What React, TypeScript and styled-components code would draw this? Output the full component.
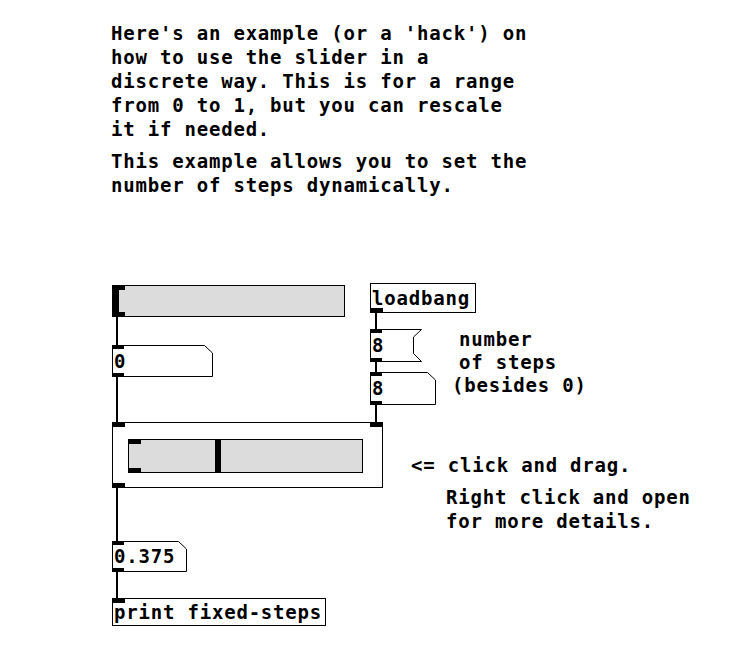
import React from 'react';
import styled, { createGlobalStyle } from 'styled-components';

const GlobalStyle = createGlobalStyle`
  html, body {
    margin: 0;
    padding: 0;
    background: #ffffff;
  }
`;

interface At {
  $x: number;
  $y: number;
}

interface Sized extends At {
  $w: number;
  $h: number;
}

const Canvas = styled.div`
  position: relative;
  width: 731px;
  height: 658px;
  overflow: hidden;
  background: #ffffff;
  color: #000000;
  font-family: 'DejaVu Sans Mono', 'Liberation Mono', monospace;
  font-weight: bold;
  font-size: 19px;
  letter-spacing: 0.8px;
`;

const Cords = styled.svg`
  position: absolute;
  left: 0;
  top: 0;
  pointer-events: none;
`;

const Comment = styled.div<At>`
  position: absolute;
  left: ${({ $x }) => $x}px;
  top: ${({ $y }) => $y}px;
  white-space: pre;
`;

const Line = styled.div<{ $pitch: number; $shift?: number }>`
  line-height: ${({ $pitch }) => $pitch}px;
  margin-left: ${({ $shift }) => $shift ?? 0}px;
`;

const Para = styled.div`
  margin-top: 8px;
`;

const Node = styled.div<Sized>`
  position: absolute;
  left: ${({ $x }) => $x}px;
  top: ${({ $y }) => $y}px;
  width: ${({ $w }) => $w}px;
  height: ${({ $h }) => $h}px;
  box-sizing: border-box;
`;

const ObjectBox = styled(Node)`
  border: 1px solid #000000;
  padding-left: 1px;
  line-height: ${({ $h }) => $h - 2}px;
  white-space: pre;
`;

const Outline = styled.svg`
  position: absolute;
  left: 0;
  top: 0;
  overflow: visible;
`;

const Label = styled.span<{ $h: number }>`
  position: relative;
  display: block;
  padding-left: 2px;
  line-height: ${({ $h }) => $h}px;
  white-space: pre;
`;

const Iolet = styled.span<{ $side: 'left' | 'right'; $edge: 'top' | 'bottom' }>`
  position: absolute;
  ${({ $side }) => $side}: 0;
  ${({ $edge }) => $edge}: 0;
  width: 12px;
  height: 4px;
  background: #000000;
`;

const Track = styled(Node)`
  border: 1px solid #000000;
  background: #dcdcdc;
`;

const Knob = styled.span`
  position: absolute;
  top: 0;
  bottom: 0;
  width: 6px;
  background: #000000;
`;

const Frame = styled(Node)`
  border: 1px solid #000000;
  background: #ffffff;
`;

// number boxes have a clipped top-right corner, message boxes a flag on the right
const FlagBox: React.FC<Sized & { $kind: 'number' | 'message'; text: string }> = ({
  $x,
  $y,
  $w,
  $h,
  $kind,
  text,
}) => {
  const c = 8;
  const r = $w - 0.5;
  const b = $h - 0.5;
  const points =
    $kind === 'number'
      ? `0.5,0.5 ${r - c},0.5 ${r},${c} ${r},${b} 0.5,${b}`
      : `0.5,0.5 ${r},0.5 ${r - c},${c} ${r - c},${b - c} ${r},${b} 0.5,${b}`;
  return (
    <Node $x={$x} $y={$y} $w={$w} $h={$h}>
      <Outline width={$w} height={$h}>
        <polygon points={points} fill="#ffffff" stroke="#000000" strokeWidth={1} />
      </Outline>
      <Label $h={$h}>{text}</Label>
      <Iolet $side="left" $edge="top" />
      <Iolet $side="left" $edge="bottom" />
    </Node>
  );
};

const Slider: React.FC<Sized & { value: number }> = ({ $x, $y, $w, $h, value }) => (
  <Track $x={$x} $y={$y} $w={$w} $h={$h}>
    <Iolet $side="left" $edge="top" />
    <Iolet $side="left" $edge="bottom" />
    <Knob style={{ left: Math.max(0, Math.round(value * ($w - 2)) - 1) }} />
  </Track>
);

const cords: [number, number, number, number][] = [
  [117, 317, 117, 345],
  [117, 377, 117, 422],
  [117, 488, 117, 541],
  [117, 572, 117, 598],
  [376, 313, 376, 329],
  [376, 362, 376, 372],
  [376, 405, 376, 422],
];

export default function App() {
  return (
    <>
      <GlobalStyle />
      <Canvas>
        <Cords width={731} height={658}>
          {cords.map(([x1, y1, x2, y2], i) => (
            <line key={i} x1={x1} y1={y1} x2={x2} y2={y2} stroke="#000000" strokeWidth={2} />
          ))}
        </Cords>

        <Comment $x={111} $y={21}>
          <Line $pitch={24}>Here's an example (or a 'hack') on</Line>
          <Line $pitch={24}>how to use the slider in a</Line>
          <Line $pitch={24}>discrete way. This is for a range</Line>
          <Line $pitch={24}>from 0 to 1, but you can rescale</Line>
          <Line $pitch={24}>it if needed.</Line>
          <Para>
            <Line $pitch={24}>This example allows you to set the</Line>
            <Line $pitch={24}>number of steps dynamically.</Line>
          </Para>
        </Comment>

        <Slider $x={112} $y={285} $w={233} $h={32} value={0} />
        <FlagBox $kind="number" $x={112} $y={345} $w={101} $h={32} text="0" />

        <ObjectBox $x={370} $y={283} $w={106} $h={30}>
          loadbang
          <Iolet $side="left" $edge="bottom" />
        </ObjectBox>
        <FlagBox $kind="message" $x={370} $y={329} $w={52} $h={33} text="8" />
        <FlagBox $kind="number" $x={370} $y={372} $w={66} $h={33} text="8" />

        <Comment $x={459} $y={328}>
          <Line $pitch={23}>number</Line>
          <Line $pitch={23}>of steps</Line>
          <Line $pitch={23} $shift={-7}>(besides 0)</Line>
        </Comment>

        <Frame $x={112} $y={422} $w={271} $h={66}>
          <Iolet $side="left" $edge="top" />
          <Iolet $side="right" $edge="top" />
          <Iolet $side="left" $edge="bottom" />
          <Slider $x={15} $y={16} $w={235} $h={34} value={0.375} />
        </Frame>

        <Comment $x={411} $y={453}>
          <Line $pitch={24}>{'<= click and drag.'}</Line>
          <Para>
            <Line $pitch={24} $shift={35}>Right click and open</Line>
            <Line $pitch={24} $shift={35}>for more details.</Line>
          </Para>
        </Comment>

        <FlagBox $kind="number" $x={112} $y={541} $w={75} $h={31} text="0.375" />

        <ObjectBox $x={112} $y={598} $w={214} $h={28}>
          print fixed-steps
          <Iolet $side="left" $edge="top" />
        </ObjectBox>
      </Canvas>
    </>
  );
}
